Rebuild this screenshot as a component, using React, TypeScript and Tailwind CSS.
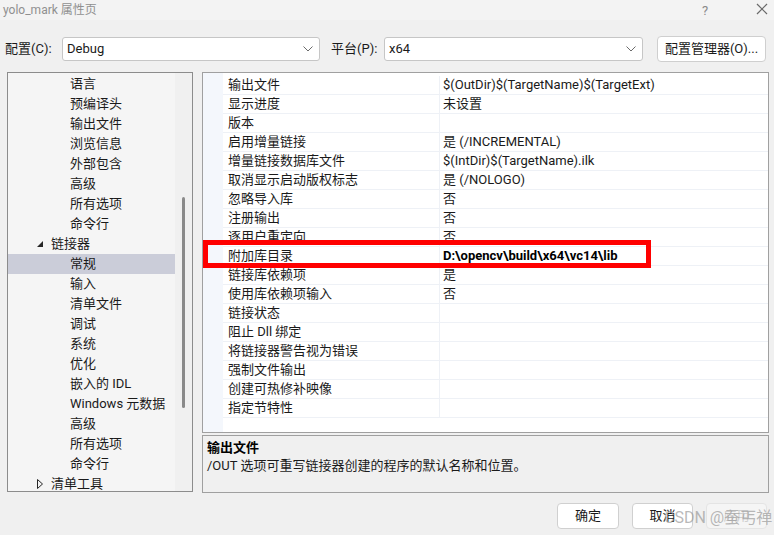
const FONT = "font-['Segoe_UI','Roboto','Noto_Sans_CJK_SC',sans-serif]";

type TreeItem = { label: string; level: 0 | 1; expanded?: boolean; selected?: boolean };

const treeItems: TreeItem[] = [
  { label: "语言", level: 1 },
  { label: "预编译头", level: 1 },
  { label: "输出文件", level: 1 },
  { label: "浏览信息", level: 1 },
  { label: "外部包含", level: 1 },
  { label: "高级", level: 1 },
  { label: "所有选项", level: 1 },
  { label: "命令行", level: 1 },
  { label: "链接器", level: 0, expanded: true },
  { label: "常规", level: 1, selected: true },
  { label: "输入", level: 1 },
  { label: "清单文件", level: 1 },
  { label: "调试", level: 1 },
  { label: "系统", level: 1 },
  { label: "优化", level: 1 },
  { label: "嵌入的 IDL", level: 1 },
  { label: "Windows 元数据", level: 1 },
  { label: "高级", level: 1 },
  { label: "所有选项", level: 1 },
  { label: "命令行", level: 1 },
  { label: "清单工具", level: 0, expanded: false },
];

const props: { name: string; value: string; bold?: boolean }[] = [
  { name: "输出文件", value: "$(OutDir)$(TargetName)$(TargetExt)" },
  { name: "显示进度", value: "未设置" },
  { name: "版本", value: "" },
  { name: "启用增量链接", value: "是 (/INCREMENTAL)" },
  { name: "增量链接数据库文件", value: "$(IntDir)$(TargetName).ilk" },
  { name: "取消显示启动版权标志", value: "是 (/NOLOGO)" },
  { name: "忽略导入库", value: "否" },
  { name: "注册输出", value: "否" },
  { name: "逐用户重定向", value: "否" },
  { name: "附加库目录", value: "D:\\opencv\\build\\x64\\vc14\\lib", bold: true },
  { name: "链接库依赖项", value: "是" },
  { name: "使用库依赖项输入", value: "否" },
  { name: "链接状态", value: "" },
  { name: "阻止 Dll 绑定", value: "" },
  { name: "将链接器警告视为错误", value: "" },
  { name: "强制文件输出", value: "" },
  { name: "创建可热修补映像", value: "" },
  { name: "指定节特性", value: "" },
];

function Chevron() {
  return (
    <svg width="10" height="6" viewBox="0 0 10 6" aria-hidden>
      <path d="M0.5 0.5 L5 5 L9.5 0.5" fill="none" stroke="#6b6b6b" strokeWidth="1" />
    </svg>
  );
}

function Combo({ value, className }: { value: string; className: string }) {
  return (
    <div
      className={`h-[24px] flex items-center justify-between bg-white border border-[#c6c6c6] rounded-[3px] pl-[4px] pr-[6px] ${className}`}
    >
      <span className="text-[13px] text-[#1a1a1a]">{value}</span>
      <Chevron />
    </div>
  );
}

function Tree() {
  return (
    <div className="w-[186px] h-[420px] border border-[#8c8c8c] bg-[#f5f5f5] flex overflow-hidden">
      <div className="flex-1 flex flex-col pt-[1px]">
        {treeItems.map((it, i) => (
          <div
            key={i}
            className={`h-[20px] shrink-0 flex items-center text-[13px] text-[#1a1a1a] ${
              it.selected ? "bg-[#cbcdd9]" : ""
            } ${it.level === 1 ? "pl-[62px]" : "pl-[29px]"}`}
          >
            {it.level === 0 && (
              <span className="w-[14px] flex items-center">
                {it.expanded ? (
                  <svg width="6" height="6" viewBox="0 0 6 6" aria-hidden>
                    <path d="M6 0 L6 6 L0 6 Z" fill="#262626" />
                  </svg>
                ) : (
                  <svg width="6" height="10" viewBox="0 0 6 10" aria-hidden>
                    <path d="M0.5 0.5 L5.5 5 L0.5 9.5 Z" fill="none" stroke="#262626" strokeWidth="1" />
                  </svg>
                )}
              </span>
            )}
            <span>{it.label}</span>
          </div>
        ))}
      </div>
      <div className="w-[17px] shrink-0 bg-[#f0f0f0] flex justify-center">
        <div className="mt-[124px] w-[3px] h-[211px] rounded-full bg-[#8a8a8a]" />
      </div>
    </div>
  );
}

function Grid() {
  return (
    <div className="relative h-[361px] border border-[#a0a0a0] bg-white flex">
      <div className="w-[20px] shrink-0 bg-[#f4f7fc]" />
      <div className="flex-1 flex flex-col pt-[3px]">
        {props.map((p, i) => (
          <div key={i} className="h-[19px] shrink-0 flex border-b border-[#eef1f6] text-[13px] text-[#1a1a1a]">
            <div className="w-[216px] shrink-0 pl-[5px] flex items-center">{p.name}</div>
            <div
              className={`flex-1 border-l border-[#eef1f6] pl-[3px] flex items-center ${
                p.bold ? "font-bold text-black" : ""
              }`}
            >
              {p.value}
            </div>
          </div>
        ))}
      </div>
      <div className="absolute left-0 top-[167px] w-[448px] h-[28px] border-[5px] border-[#ff0000]" />
    </div>
  );
}

export default function App() {
  return (
    <div className={`relative w-[774px] h-[535px] bg-[#f0f0f0] overflow-hidden ${FONT} text-[13px] text-[#1a1a1a]`}>
      <div className="relative h-[20px] flex items-center pl-[3px] bg-[#f3f3f3]">
        <span className="text-[12px] text-[#909090]">yolo_mark 属性页</span>
        <span className="absolute left-[702px] top-[1px] text-[13px] text-[#8a8a8a]">?</span>
        <svg
          className="absolute left-[756px] top-[3px]"
          width="12"
          height="12"
          viewBox="0 0 12 12"
          aria-hidden
        >
          <line x1="1" y1="1" x2="11" y2="11" stroke="#6a6a6a" strokeWidth="1.2" />
          <line x1="11" y1="1" x2="1" y2="11" stroke="#6a6a6a" strokeWidth="1.2" />
        </svg>
      </div>

      <div className="mt-[16px] h-[26px] flex items-center pl-[5px]">
        <span className="w-[57px]">配置(C):</span>
        <Combo value="Debug" className="w-[258px]" />
        <span className="ml-[11px] w-[53px]">平台(P):</span>
        <Combo value="x64" className="w-[259px]" />
        <button
          type="button"
          className="ml-[14px] w-[109px] h-[26px] bg-white border border-[#cfcfcf] rounded-[4px] text-[13px]"
        >
          配置管理器(O)...
        </button>
      </div>

      <div className="mt-[10px] flex pl-[7px] gap-[9px]">
        <Tree />
        <div className="w-[567px] flex flex-col gap-[2px]">
          <Grid />
          <div className="h-[58px] border border-[#a0a0a0] px-[4px] pt-[3px]">
            <div className="font-bold text-black leading-[18px]">输出文件</div>
            <div className="leading-[17px]">/OUT 选项可重写链接器创建的程序的默认名称和位置。</div>
          </div>
        </div>
      </div>

      <div className="mt-[10px] flex justify-end pr-[7px] gap-[13px]">
        <button type="button" className="w-[62px] h-[26px] bg-white border border-[#d0d0d0] rounded-[4px]">
          确定
        </button>
        <button type="button" className="w-[61px] h-[26px] bg-white border border-[#d0d0d0] rounded-[4px]">
          取消
        </button>
        <button
          type="button"
          className="w-[61px] h-[26px] bg-[#f5f5f5] border border-[#e4e4e4] rounded-[4px] text-[#d0d0d0]"
        >
          应用
        </button>
      </div>

      <div className="absolute left-[664px] top-[506px] text-[16px] text-[#9a9a9a]/70 font-['Roboto','Noto_Sans_CJK_SC',sans-serif] pointer-events-none">
        CSDN @蚕丐禅
      </div>
    </div>
  );
}
